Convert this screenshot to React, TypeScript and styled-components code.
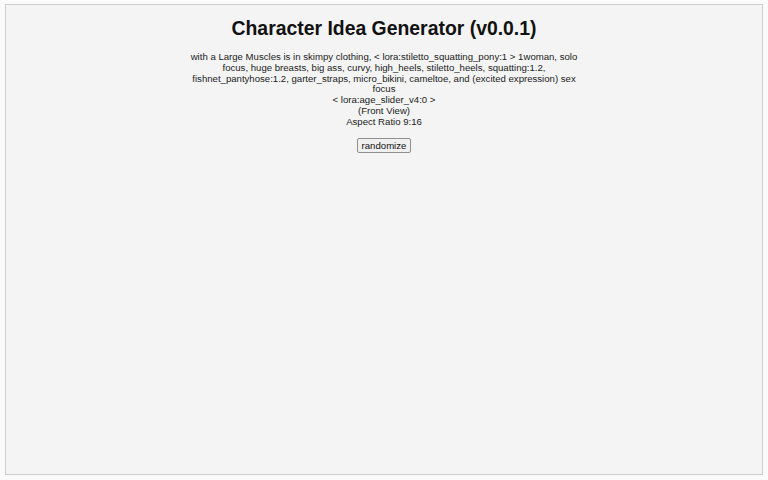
import React from 'react';
import styled, { createGlobalStyle } from 'styled-components';

const GlobalStyle = createGlobalStyle`
  html, body {
    margin: 0;
    padding: 0;
    background: #fafafa;
  }
  body {
    font-family: 'Liberation Sans', Arial, sans-serif;
    color: #111;
  }
`;

const Page = styled.div`
  padding: 4px 5px 5px 5px;
  box-sizing: border-box;
  height: 480px;
`;

const Frame = styled.main`
  box-sizing: border-box;
  height: 100%;
  border: 1px solid #cfcfcf;
  background: #f4f4f4;
  display: flex;
  flex-direction: column;
  align-items: center;
  padding-top: 11px;
`;

const Title = styled.h1`
  margin: 0;
  font-size: 19.4px;
  font-weight: 700;
  line-height: 24px;
  color: #111;
`;

const Prompt = styled.div`
  margin-top: 12px;
  max-width: 392px;
  text-align: center;
  font-size: 9.6px;
  line-height: 10.8px;
  color: #222;
`;

const Line = styled.div``;

const RandomizeButton = styled.button`
  margin-top: 10px;
  font-family: 'Liberation Sans', Arial, sans-serif;
  font-size: 9.6px;
  line-height: 11px;
  padding: 1px 4px;
  color: #111;
  background: #f0f0f0;
  border: 1px solid #8f8f8f;
  border-radius: 2px;
`;

const App: React.FC = () => {
  return (
    <>
      <GlobalStyle />
      <Page>
        <Frame>
          <Title>Character Idea Generator (v0.0.1)</Title>
          <Prompt>
            <Line>
              with a Large Muscles is in skimpy clothing, &lt; lora:stiletto_squatting_pony:1 &gt; 1woman, solo
              focus, huge breasts, big ass, curvy, high_heels, stiletto_heels, squatting:1.2,
              fishnet_pantyhose:1.2, garter_straps, micro_bikini, cameltoe, and (excited expression) sex
              focus
            </Line>
            <Line>&lt; lora:age_slider_v4:0 &gt;</Line>
            <Line>(Front View)</Line>
            <Line>Aspect Ratio 9:16</Line>
          </Prompt>
          <RandomizeButton>randomize</RandomizeButton>
        </Frame>
      </Page>
    </>
  );
};

export default App;
